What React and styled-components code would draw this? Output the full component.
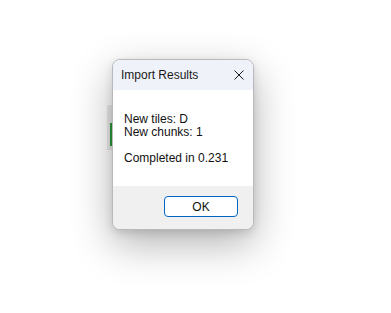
import React from "react";
import styled, { createGlobalStyle } from "styled-components";

const Global = createGlobalStyle`
  html, body { margin: 0; padding: 0; background: #ffffff; }
  body { font-family: "Liberation Sans", Arial, sans-serif; }
`;

const Stage = styled.div`
  position: relative;
  width: 391px;
  height: 313px;
  padding: 59px 0 0 112px;
  box-sizing: border-box;
`;

const BackWindow = styled.div`
  position: absolute;
  left: 107px;
  top: 105px;
  width: 20px;
  height: 45px;
  background: #ececec;
`;

const GreenBar = styled.div`
  position: absolute;
  left: 3px;
  top: 18px;
  width: 3px;
  height: 23px;
  background: #2f9b3c;
`;

const Dialog = styled.div`
  position: relative;
  width: 142px;
  height: 171px;
  box-sizing: border-box;
  border: 1px solid #b9b9bd;
  border-radius: 8px;
  overflow: hidden;
  display: flex;
  flex-direction: column;
  box-shadow: 0 14px 40px rgba(0, 0, 0, 0.3), 0 3px 8px rgba(0, 0, 0, 0.12);
  background: #ffffff;
`;

const TitleBar = styled.div`
  height: 30px;
  flex: none;
  background: #eff2f9;
  display: flex;
  align-items: center;
  justify-content: space-between;
  padding: 0 9px 0 8px;
`;

const Title = styled.span`
  font-size: 12px;
  color: #1a1a1a;
`;

const Close = styled.svg`
  width: 10px;
  height: 10px;
  display: block;
`;

const Body = styled.div`
  flex: 1;
  background: #ffffff;
  padding: 23px 11px 0;
  font-size: 12px;
  line-height: 13px;
  color: #111111;
  white-space: pre;
`;

const Footer = styled.div`
  height: 43px;
  flex: none;
  background: #f0f0f0;
  display: flex;
  justify-content: flex-end;
  padding: 10px 15px 0 0;
  box-sizing: border-box;
`;

const Button = styled.button`
  width: 74px;
  height: 21px;
  box-sizing: border-box;
  border: 1px solid #0067c0;
  border-radius: 4px;
  background: #ffffff;
  font-family: "Liberation Sans", Arial, sans-serif;
  font-size: 12px;
  color: #111111;
  padding: 0;
  line-height: 1;
`;

export default function App() {
  return (
    <>
      <Global />
      <Stage>
        <BackWindow>
          <GreenBar />
        </BackWindow>
        <Dialog>
          <TitleBar>
            <Title>Import Results</Title>
            <Close viewBox="0 0 10 10">
              <path d="M0.5 0.5 L9.5 9.5 M9.5 0.5 L0.5 9.5" stroke="#1a1a1a" strokeWidth="1" fill="none" />
            </Close>
          </TitleBar>
          <Body>{"New tiles: D\nNew chunks: 1\n\nCompleted in 0.231"}</Body>
          <Footer>
            <Button>OK</Button>
          </Footer>
        </Dialog>
      </Stage>
    </>
  );
}
